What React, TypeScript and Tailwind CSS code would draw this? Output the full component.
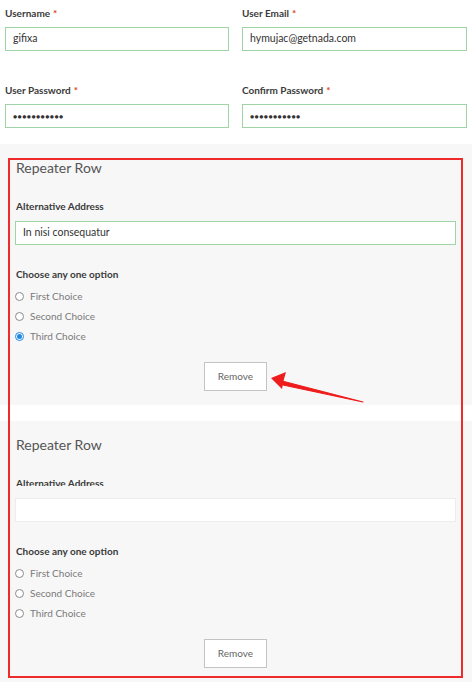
const font = { fontFamily: 'Lato, "Open Sans", sans-serif' };

function Label({ text, required }: { text: string; required?: boolean }) {
  return (
    <div className="h-[27px] pt-[6px] text-[10px] font-bold leading-[14px] text-[#3b3b3b]">
      {text}
      {required && <span className="ml-[3px] text-[#e2401c]">*</span>}
    </div>
  );
}

function Field({ label, value, secret }: { label: string; value: string; secret?: boolean }) {
  return (
    <div>
      <Label text={label} required />
      <div
        className={`flex h-[24px] items-center border border-[#9fd5a6] bg-white px-[7px] text-[#333] ${
          secret ? 'text-[7px] tracking-[0.4px]' : 'text-[10.5px]'
        }`}
      >
        {value}
      </div>
    </div>
  );
}

function Radio({ label, checked }: { label: string; checked?: boolean }) {
  return (
    <div className="flex h-[20px] items-center gap-[6px] text-[10px] text-[#7a7a7a]">
      {checked ? (
        <span className="flex h-[9px] w-[9px] items-center justify-center rounded-full border border-[#1e88e5] bg-white">
          <span className="h-[5px] w-[5px] rounded-full bg-[#1e88e5]" />
        </span>
      ) : (
        <span className="h-[9px] w-[9px] rounded-full border border-[#8a8a8a] bg-white" />
      )}
      {label}
    </div>
  );
}

function RepeaterRow({ address, checked, first }: { address: string; checked: number; first?: boolean }) {
  return (
    <div className="h-[261px] bg-[#f7f7f7] pl-[15px] pr-[16px]">
      <div className="flex h-[42px] items-end pb-[9px] pl-[1px] text-[14px] leading-[18px] text-[#555]">
        Repeater Row
      </div>
      <div className="h-[35px] pl-[1px] pt-[13px] text-[10px] font-bold leading-[14px] text-[#3b3b3b]">
        <div className={first ? '' : 'h-[10px] overflow-hidden'}>Alternative Address</div>
      </div>
      <div
        className={`flex h-[24px] items-center bg-white px-[7px] text-[10.5px] text-[#333] border ${
          first ? 'border-[#9fd5a6]' : 'border-[#ececec]'
        }`}
      >
        {address}
      </div>
      <div className="h-[37px] pl-[1px] pt-[22px] text-[10px] font-bold leading-[14px] text-[#3b3b3b]">
        Choose any one option
      </div>
      <div className="pt-[4px]">
        {['First Choice', 'Second Choice', 'Third Choice'].map((c, i) => (
          <Radio key={c} label={c} checked={i === checked} />
        ))}
      </div>
      <div className="flex justify-center pt-[16px]">
        <button className="h-[29px] w-[63px] border border-[#c4c4c4] bg-white text-[10px] text-[#666]">
          Remove
        </button>
      </div>
    </div>
  );
}

export default function App() {
  return (
    <div className="relative h-[696px] w-[474px] overflow-hidden bg-white" style={font}>
      <div className="grid grid-cols-[224px_225px] gap-x-[13px] pl-[5px]">
        <Field label="Username" value="gifixa" />
        <Field label="User Email" value="hymujac@getnada.com" />
        <div className="pt-[26px]">
          <Field label="User Password" value="●●●●●●●●●●●" secret />
        </div>
        <div className="pt-[26px]">
          <Field label="Confirm Password" value="●●●●●●●●●●●" secret />
        </div>
      </div>

      <div className="mt-[16px] w-[472px]">
        <RepeaterRow address="In nisi consequatur" checked={2} first />
        <div className="h-[16px] bg-white" />
        <RepeaterRow address="" checked={-1} />
      </div>

      {/* annotation box */}
      <div className="pointer-events-none absolute left-[8px] top-[158px] h-[520px] w-[455px] border-2 border-[#ee2a2a]" />

      {/* annotation arrow */}
      <svg className="pointer-events-none absolute left-0 top-0" width="474" height="696">
        <polygon points="363,402 282,381 283,385" fill="#ee1c1c" stroke="#ee1c1c" strokeWidth="1.2" strokeLinejoin="round" />
        <polygon points="271,378 286,372 284,379 282,389" fill="#ee1c1c" />
      </svg>
    </div>
  );
}
